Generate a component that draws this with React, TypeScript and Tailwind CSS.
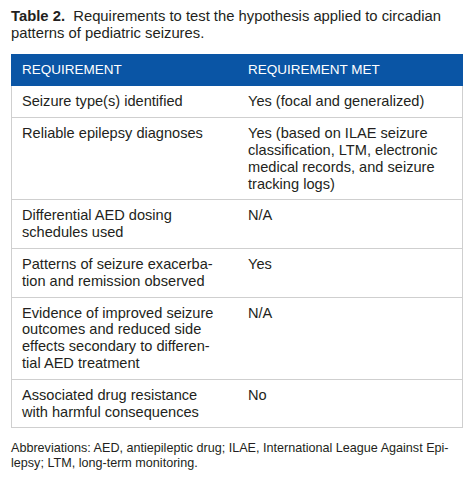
import React from "react";

const rows: [string[], string[]][] = [
  [["Seizure type(s) identified"], ["Yes (focal and generalized)"]],
  [
    ["Reliable epilepsy diagnoses"],
    ["Yes (based on ILAE seizure", "classification, LTM, electronic", "medical records, and seizure", "tracking logs)"],
  ],
  [["Differential AED dosing", "schedules used"], ["N/A"]],
  [["Patterns of seizure exacerba-", "tion and remission observed"], ["Yes"]],
  [
    ["Evidence of improved seizure", "outcomes and reduced side", "effects secondary to differen-", "tial AED treatment"],
    ["N/A"],
  ],
  [["Associated drug resistance", "with harmful consequences"], ["No"]],
];

export default function App() {
  return (
    <div
      className="w-[474px] h-[479px] bg-white text-[#231f20] overflow-hidden"
      style={{ fontFamily: '"Liberation Sans", Arial, sans-serif' }}
    >
      <div className="pl-[11px] pt-[8px] text-[14.8px] leading-[16.7px]">
        <div className="whitespace-nowrap">
          <span className="font-bold">Table 2.</span>&nbsp; Requirements to test the hypothesis applied to circadian
        </div>
        <div>patterns of pediatric seizures.</div>
      </div>
      <div className="ml-[11px] mt-[13px] w-[452px]">
        <div className="grid grid-cols-[226px_1fr] bg-[#0a55a5] text-white text-[13.5px] h-[32px] items-center">
          <div className="pl-[11px]">REQUIREMENT</div>
          <div className="pl-[11px]">REQUIREMENT MET</div>
        </div>
        <div className="border-x border-b border-[#cfcfcf] text-[14.6px] leading-[16.8px]">
          {rows.map((r, i) => (
            <div
              key={i}
              className={`grid grid-cols-[225px_1fr] py-[7px] ${i > 0 ? "border-t border-[#cfcfcf]" : ""}`}
            >
              <div className="pl-[10px]">
                {r[0].map((l, j) => (
                  <div key={j} className="whitespace-nowrap">{l}</div>
                ))}
              </div>
              <div className="pl-[11px]">
                {r[1].map((l, j) => (
                  <div key={j} className="whitespace-nowrap">{l}</div>
                ))}
              </div>
            </div>
          ))}
        </div>
      </div>
      <div className="pl-[11px] mt-[13px] text-[12.6px] leading-[15px]">
        <div className="whitespace-nowrap">
          Abbreviations: AED, antiepileptic drug; ILAE, International League Against Epi-
        </div>
        <div>lepsy; LTM, long-term monitoring.</div>
      </div>
    </div>
  );
}
